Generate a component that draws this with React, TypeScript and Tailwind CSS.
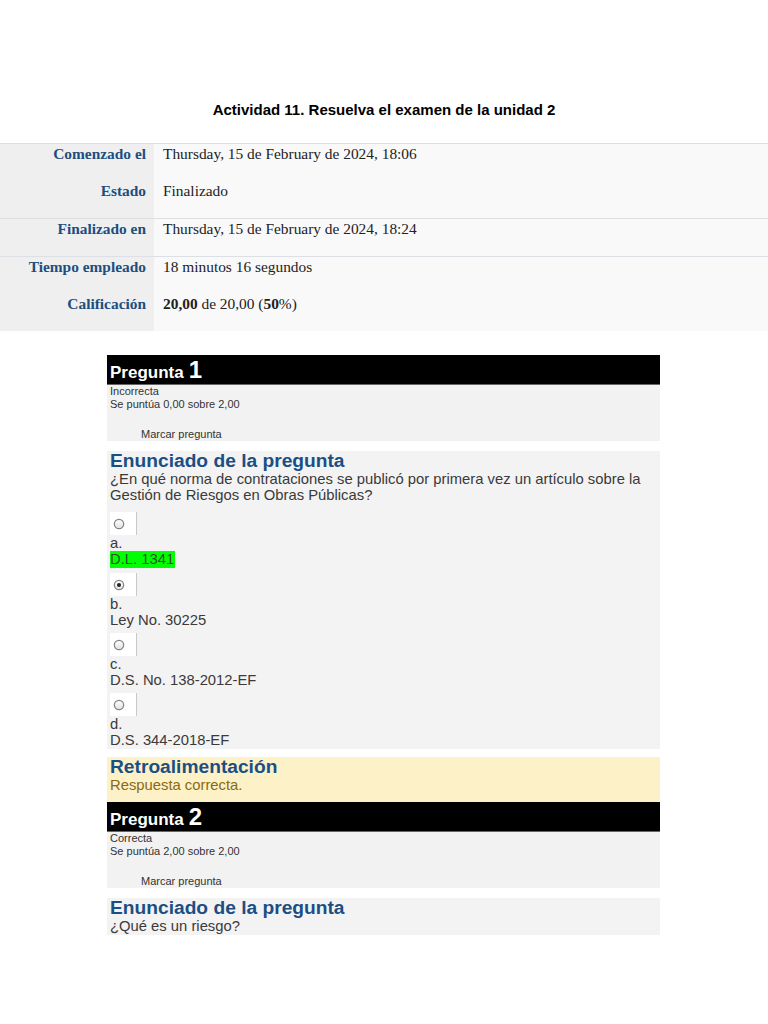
import React from "react";

type Option = { letter: string; text: string; checked?: boolean; highlight?: boolean };

const summary: { label: string; value: React.ReactNode; h: string; border?: boolean }[] = [
  { label: "Comenzado el", value: "Thursday, 15 de February de 2024, 18:06", h: "h-[38px]", border: true },
  { label: "Estado", value: "Finalizado", h: "h-[37px]" },
  { label: "Finalizado en", value: "Thursday, 15 de February de 2024, 18:24", h: "h-[38px]", border: true },
  { label: "Tiempo empleado", value: "18 minutos 16 segundos", h: "h-[38px]", border: true },
  {
    label: "Calificación",
    value: (
      <>
        <b>20,00</b> de 20,00 (<b>50</b>%)
      </>
    ),
    h: "h-[37px]",
  },
];

const options: Option[] = [
  { letter: "a.", text: "D.L. 1341", highlight: true },
  { letter: "b.", text: "Ley No. 30225", checked: true },
  { letter: "c.", text: "D.S. No. 138-2012-EF" },
  { letter: "d.", text: "D.S. 344-2018-EF" },
];

function Radio({ checked }: { checked?: boolean }) {
  return (
    <div className="w-[27px] h-[23px] bg-white border-r border-[#c9c9c9] flex items-center pl-[3px]">
      <svg width="12" height="12" viewBox="0 0 12 12">
        <defs>
          <linearGradient id="rg" x1="0" y1="0" x2="0" y2="1">
            <stop offset="0" stopColor="#ffffff" />
            <stop offset="1" stopColor="#e0e0e0" />
          </linearGradient>
        </defs>
        <circle cx="6" cy="6" r="4.7" fill="url(#rg)" stroke="#858585" strokeWidth="1.2" />
        {checked && <circle cx="6" cy="6" r="2" fill="#222" />}
      </svg>
    </div>
  );
}

function QuestionHeader({ n, state, score }: { n: number; state: string; score: string }) {
  return (
    <>
      <div className="h-[30px] bg-black border-b border-[#666] flex items-end pl-[3px] pb-[3px] text-white font-bold leading-none">
        <span className="text-[17px]">Pregunta</span>
        <span className="text-[24px] ml-[5px] relative top-[1px]">{n}</span>
      </div>
      <div className="h-[56px] bg-[#f2f2f2] text-[11px] leading-[13px] text-[#333] pl-[3px]">
        <div>{state}</div>
        <div>{score}</div>
        <div className="mt-[17px] ml-[31px]">Marcar pregunta</div>
      </div>
    </>
  );
}

export default function App() {
  return (
    <div className="min-h-[1024px] bg-white text-[#333]" style={{ fontFamily: '"Liberation Sans", Arial, sans-serif' }}>
      <div className="pt-[101px] h-[143px] text-center text-[15px] font-bold text-black leading-[18px]">
        Actividad 11. Resuelva el examen de la unidad 2
      </div>

      <div style={{ fontFamily: '"Liberation Serif", "Times New Roman", serif' }} className="text-[15.4px] leading-[17px]">
        {summary.map((r) => (
          <div key={r.label} className={`flex ${r.h} ${r.border ? "border-t border-[#dcdfe3]" : ""}`}>
            <div className="w-[154px] shrink-0 bg-[#efefef] text-right pr-[8px] pt-[1px] font-bold text-[#1d4e80]">
              {r.label}
            </div>
            <div className="flex-1 bg-[#f9f9f9] pl-[9px] pt-[1px] text-[#222]">{r.value}</div>
          </div>
        ))}
      </div>

      <div className="ml-[107px] w-[553px] mt-[24px]">
        <QuestionHeader n={1} state="Incorrecta" score="Se puntúa 0,00 sobre 2,00" />

        <div className="mt-[10px] bg-[#f3f3f3] pl-[3px] pb-[1px]">
          <div className="text-[19.2px] leading-[20px] font-bold text-[#1b4f84]">Enunciado de la pregunta</div>
          <div className="text-[14.8px] leading-[16px] text-[#3a3a3a]">
            ¿En qué norma de contrataciones se publicó por primera vez un artículo sobre la Gestión de Riesgos en Obras Públicas?
          </div>
          <div className="mt-[4px] text-[14.8px] leading-[16px] text-[#3a3a3a]">
            {options.map((o) => (
              <div key={o.letter} className="pt-[5px]">
                <Radio checked={o.checked} />
                <div>{o.letter}</div>
                <div>
                  {o.highlight ? (
                    <span className="bg-[#00ff00] text-[#2f4f2f] pr-[1px] inline-block leading-[17px]">{o.text}</span>
                  ) : (
                    o.text
                  )}
                </div>
              </div>
            ))}
          </div>
        </div>

        <div className="mt-[8px] bg-[#fdf1c8] pl-[3px] h-[45px]">
          <div className="text-[19.2px] leading-[20px] font-bold text-[#1b4f84]">Retroalimentación</div>
          <div className="text-[14.8px] leading-[16px] text-[#8a6a10]">Respuesta correcta.</div>
        </div>

        <QuestionHeader n={2} state="Correcta" score="Se puntúa 2,00 sobre 2,00" />

        <div className="mt-[10px] bg-[#f3f3f3] pl-[3px] h-[37px]">
          <div className="text-[19.2px] leading-[20px] font-bold text-[#1b4f84]">Enunciado de la pregunta</div>
          <div className="text-[14.8px] leading-[16px] text-[#3a3a3a]">¿Qué es un riesgo?</div>
        </div>
      </div>
    </div>
  );
}
